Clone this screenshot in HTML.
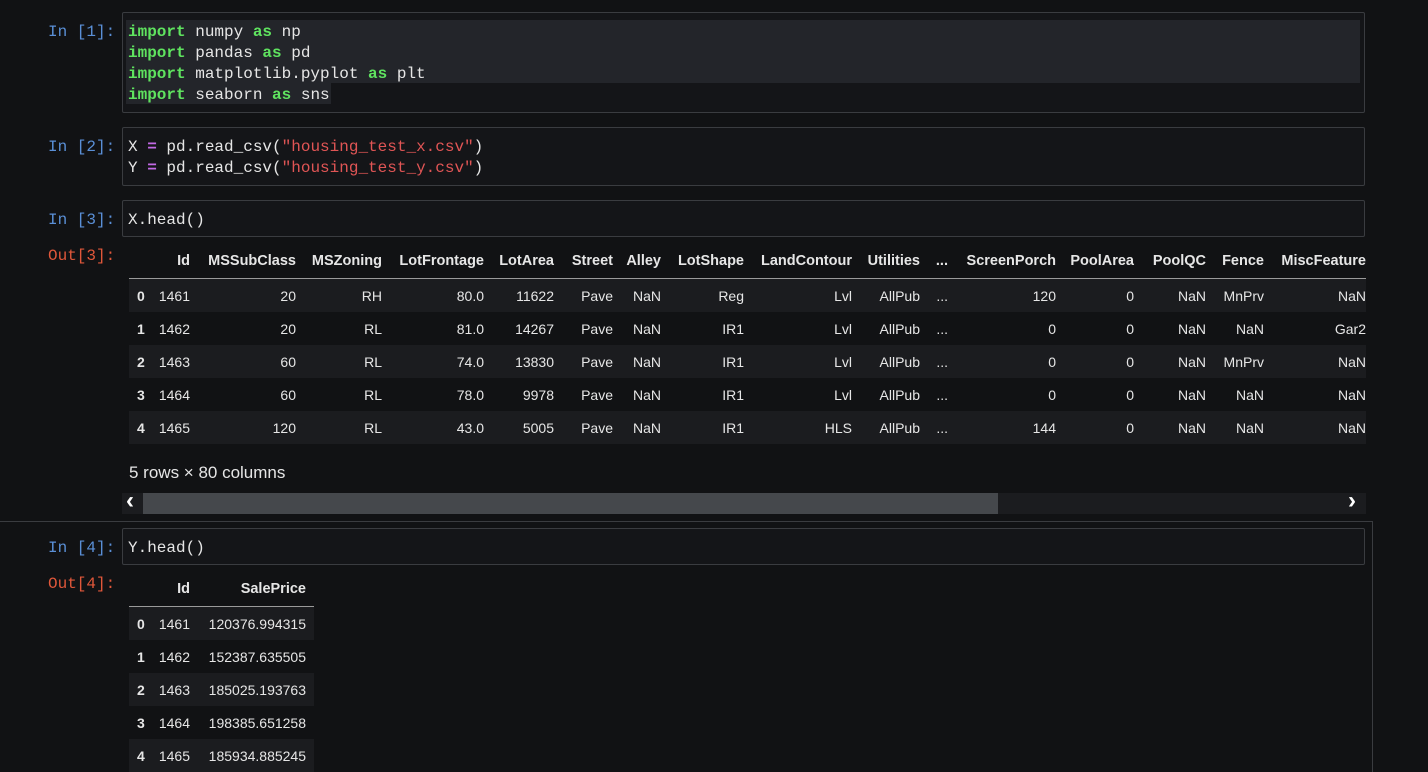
<!DOCTYPE html>
<html><head><meta charset="utf-8"><style>
body{margin:0;width:1428px;height:772px;background:#111214;overflow:hidden;position:relative;font-family:"Liberation Sans",sans-serif;}
.abs{position:absolute}
.prompt{position:absolute;font-family:"Liberation Mono",monospace;font-size:16px;color:#5a8fd6;left:48px}
.out{color:#e0573a}
.cell{position:absolute;left:122px;width:1241px;border:1px solid #3a3c40;background:#141518;border-radius:2px}
.code{position:absolute;left:128px;font-family:"Liberation Mono",monospace;font-size:16px;color:#e6e6e6;white-space:pre;line-height:21px}
.k{color:#5fe35f;font-weight:bold}
.o{color:#c36ae6;font-weight:bold}
.s{color:#e05555}
table{position:absolute;border-collapse:collapse;font-size:14px;color:#e6e6e6;table-layout:fixed}
td,th{padding:0;text-align:right;height:33px;white-space:nowrap}
th{font-weight:bold;height:34px;font-size:14.5px}
thead tr{border-bottom:1px solid #9a9a9a}
tbody tr:nth-child(odd){background:#1b1c1f}
td:first-child{font-weight:bold;text-align:left;padding-left:8px}
.sm td:last-child,.sm th:last-child{padding-right:8px}
</style></head><body>
<div class="prompt" style="top:23px">In [1]:</div>
<div class="cell" style="top:12px;height:99px"></div>
<div class="abs" style="left:126px;top:20px;width:1234px;height:63px;background:#23252a"></div>
<div class="abs" style="left:126px;top:83px;width:205px;height:21px;background:#23252a"></div>
<div class="code" style="top:22px"><span class="k">import</span> numpy <span class="k">as</span> np
<span class="k">import</span> pandas <span class="k">as</span> pd
<span class="k">import</span> matplotlib.pyplot <span class="k">as</span> plt
<span class="k">import</span> seaborn <span class="k">as</span> sns</div>

<div class="prompt" style="top:138px">In [2]:</div>
<div class="cell" style="top:127px;height:57px"></div>
<div class="code" style="top:137px">X <span class="o">=</span> pd.read_csv(<span class="s">"housing_test_x.csv"</span>)
Y <span class="o">=</span> pd.read_csv(<span class="s">"housing_test_y.csv"</span>)</div>

<div class="prompt" style="top:211px">In [3]:</div>
<div class="cell" style="top:200px;height:35px"></div>
<div class="code" style="top:210px">X.head()</div>
<div class="prompt out" style="top:247px">Out[3]:</div>

<table style="left:129px;top:244px;width:1237px">
<colgroup><col style="width:21px"><col style="width:40px"><col style="width:106px"><col style="width:86px"><col style="width:102px"><col style="width:70px"><col style="width:59px"><col style="width:48px"><col style="width:83px"><col style="width:108px"><col style="width:68px"><col style="width:28px"><col style="width:108px"><col style="width:78px"><col style="width:72px"><col style="width:58px"><col style="width:102px"></colgroup>
<thead><tr><th></th><th>Id</th><th>MSSubClass</th><th>MSZoning</th><th>LotFrontage</th><th>LotArea</th><th>Street</th><th>Alley</th><th>LotShape</th><th>LandContour</th><th>Utilities</th><th>...</th><th>ScreenPorch</th><th>PoolArea</th><th>PoolQC</th><th>Fence</th><th>MiscFeature</th></tr></thead>
<tbody>
<tr><td>0</td><td>1461</td><td>20</td><td>RH</td><td>80.0</td><td>11622</td><td>Pave</td><td>NaN</td><td>Reg</td><td>Lvl</td><td>AllPub</td><td>...</td><td>120</td><td>0</td><td>NaN</td><td>MnPrv</td><td>NaN</td></tr>
<tr><td>1</td><td>1462</td><td>20</td><td>RL</td><td>81.0</td><td>14267</td><td>Pave</td><td>NaN</td><td>IR1</td><td>Lvl</td><td>AllPub</td><td>...</td><td>0</td><td>0</td><td>NaN</td><td>NaN</td><td>Gar2</td></tr>
<tr><td>2</td><td>1463</td><td>60</td><td>RL</td><td>74.0</td><td>13830</td><td>Pave</td><td>NaN</td><td>IR1</td><td>Lvl</td><td>AllPub</td><td>...</td><td>0</td><td>0</td><td>NaN</td><td>MnPrv</td><td>NaN</td></tr>
<tr><td>3</td><td>1464</td><td>60</td><td>RL</td><td>78.0</td><td>9978</td><td>Pave</td><td>NaN</td><td>IR1</td><td>Lvl</td><td>AllPub</td><td>...</td><td>0</td><td>0</td><td>NaN</td><td>NaN</td><td>NaN</td></tr>
<tr><td>4</td><td>1465</td><td>120</td><td>RL</td><td>43.0</td><td>5005</td><td>Pave</td><td>NaN</td><td>IR1</td><td>HLS</td><td>AllPub</td><td>...</td><td>144</td><td>0</td><td>NaN</td><td>NaN</td><td>NaN</td></tr>
</tbody></table>

<div class="abs" style="left:129px;top:463px;font-size:17px;color:#e6e6e6">5 rows × 80 columns</div>
<div class="abs" style="left:122px;top:493px;width:1244px;height:21px;background:#1b1c1f"></div>
<div class="abs" style="left:143px;top:493px;width:855px;height:21px;background:#45484c"></div>
<div class="abs" style="left:126px;top:487px;color:#fff;font-size:24px;font-weight:bold;line-height:28px">&#8249;</div>
<div class="abs" style="left:1348px;top:487px;color:#fff;font-size:24px;font-weight:bold;line-height:28px">&#8250;</div>

<div class="abs" style="left:0;top:521px;width:1372px;height:1px;background:#3a3c40"></div>
<div class="abs" style="left:1372px;top:521px;width:1px;height:251px;background:#3a3c40"></div>

<div class="prompt" style="top:539px">In [4]:</div>
<div class="cell" style="top:528px;height:35px"></div>
<div class="code" style="top:538px">Y.head()</div>
<div class="prompt out" style="top:575px">Out[4]:</div>
<table class="sm" style="left:129px;top:572px;width:185px">
<colgroup><col style="width:21px"><col style="width:40px"><col style="width:124px"></colgroup>
<thead><tr><th></th><th>Id</th><th>SalePrice</th></tr></thead>
<tbody>
<tr><td>0</td><td>1461</td><td>120376.994315</td></tr>
<tr><td>1</td><td>1462</td><td>152387.635505</td></tr>
<tr><td>2</td><td>1463</td><td>185025.193763</td></tr>
<tr><td>3</td><td>1464</td><td>198385.651258</td></tr>
<tr><td>4</td><td>1465</td><td>185934.885245</td></tr>
</tbody></table>
</body></html>
